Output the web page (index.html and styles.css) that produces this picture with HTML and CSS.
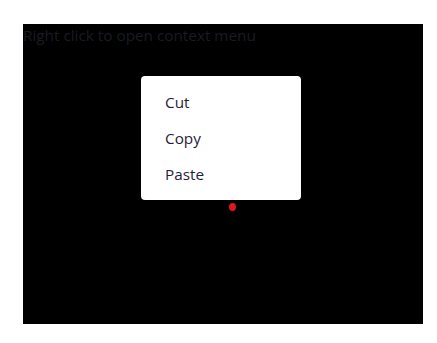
FILE: index.html
```html
<!DOCTYPE html>
<html>
<head>
<meta charset="utf-8">
<link rel="stylesheet" href="styles.css">
</head>
<body>
<div class="page">
  <div class="canvas">
    <div class="hint">Right click to open context menu</div>
    <ul class="menu">
      <li class="item">Cut</li>
      <li class="item">Copy</li>
      <li class="item">Paste</li>
    </ul>
    <div class="dot"></div>
  </div>
</div>
</body>
</html>
```
FILE: styles.css
```css
html, body {
  margin: 0;
  padding: 0;
  background: #ffffff;
}
.page {
  padding: 24px 14px 19px 23px;
}
.canvas {
  position: relative;
  width: 400px;
  height: 300px;
  background: #000000;
  font-family: "Open Sans", "Noto Sans", sans-serif;
}
.hint {
  font-size: 15.3px;
  line-height: 22px;
  color: #1b1b22;
}
.menu {
  position: absolute;
  left: 118px;
  top: 52px;
  width: 160px;
  margin: 0;
  padding: 8px 0;
  list-style: none;
  background: #ffffff;
  border-radius: 4px;
}
.item {
  height: 36px;
  line-height: 36px;
  padding-left: 24px;
  font-size: 15.3px;
  color: #1f1d3c;
}
.dot {
  position: absolute;
  left: 206px;
  top: 179px;
  width: 7px;
  height: 8px;
  border-radius: 50%;
  background: #e2161b;
}
```
